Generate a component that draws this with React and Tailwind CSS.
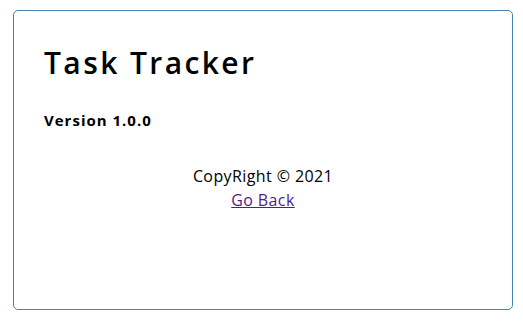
export default function App() {
  return (
    <div className="pt-[10px] bg-white min-h-[323px]" style={{ fontFamily: '"Open Sans", sans-serif' }}>
      <div className="ml-[13px] w-[500px] min-h-[300px] border border-[#4682b4] rounded-[5px] p-[30px] text-black">
        <h1 className="text-[30px] leading-[41px] font-semibold tracking-[2.4px] mt-[1px]">Task Tracker</h1>
        <h4 className="mt-[25px] text-[15px] leading-[24px] font-bold tracking-[1px]">Version 1.0.0</h4>
        <footer className="mt-[32px] text-center text-[16px] leading-[24px] tracking-[0.4px]">
          <p>CopyRight © 2021</p>
          <a href="#" className="text-[#551a8b] underline">Go Back</a>
        </footer>
      </div>
    </div>
  );
}
